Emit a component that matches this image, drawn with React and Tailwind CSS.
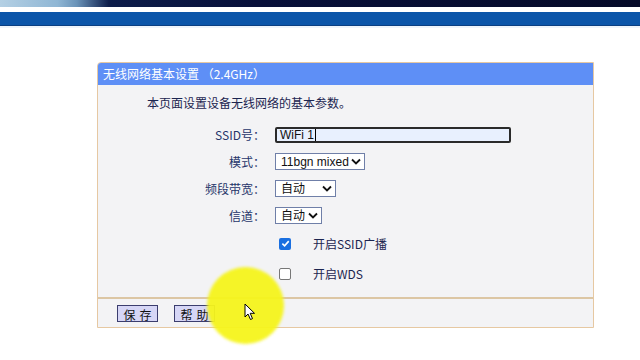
import React from "react";

const cjk = "font-['SimSun','Noto_Sans_CJK_SC',sans-serif]";

function Chevron() {
    return (
        <svg width="10" height="7" viewBox="0 0 10 7" className="shrink-0">
            <path d="M1 1.5 L5 5.5 L9 1.5" fill="none" stroke="#111" strokeWidth="1.8" />
        </svg>
    );
}

function FakeSelect({ value, width }) {
    return (
        <div
            className={`h-[17px] ${width} bg-white border border-[#6f7fa8] flex items-center justify-between pl-[5px] pr-[3px] text-[12px] text-[#111] font-['Liberation_Sans','Noto_Sans_CJK_SC',sans-serif]`}
        >
            <span>{value}</span>
            <Chevron />
        </div>
    );
}

function Row({ label, h = "h-[27px]", children }) {
    return (
        <div className={`flex items-center ${h}`}>
            <div className={`w-[169px] text-right pr-[2px] text-[12px] text-[#26356a] ${cjk}`}>{label}</div>
            <div className="ml-[8px] flex items-center">{children}</div>
        </div>
    );
}

export default function App() {
    return (
        <div className="w-[640px] h-[360px] bg-white overflow-hidden relative">
            {/* banner */}
            <div className="h-[7px] bg-[linear-gradient(90deg,#b4d0e4_0%,#8fb6d4_9%,#6a93b8_12%,#0d1d4a_17%,#08103a_40%,#050a28_100%)]" />
            <div className="h-[5px] bg-white" />
            <div className="h-[14px] bg-[#0b55a9] border-b border-[#0a3f82]" />
            <div className="h-[2px] bg-[#eef4fb]" />

            {/* panel */}
            <div className="ml-[97px] mt-[34px] w-[497px] border border-[#e6c8a2] rounded-tl-[4px] bg-[#f3f3f5]">
                <div className={`h-[22px] bg-[#5e8ff6] rounded-tl-[3px] flex items-center pl-[5px] text-[12px] text-white ${cjk}`}>
                    无线网络基本设置 （2.4GHz）
                </div>
                <div className="pb-[8px]">
                    <div className={`h-[36px] flex items-center pl-[49px] text-[12px] text-[#1c2550] ${cjk}`}>
                        本页面设置设备无线网络的基本参数。
                    </div>
                    <Row label="SSID号：">
                        <div className="w-[236px] h-[16px] border-2 border-[#2a2a2a] rounded-[2px] bg-[#e8f0fe] flex items-center pl-[3px] text-[12px] text-[#111] font-['Liberation_Sans',sans-serif]">
                            WiFi 1<span className="w-px h-[12px] bg-black ml-[1px]" />
                        </div>
                    </Row>
                    <Row label="模式：">
                        <FakeSelect value="11bgn mixed" width="w-[90px]" />
                    </Row>
                    <Row label="频段带宽：">
                        <FakeSelect value="自动" width="w-[61px]" />
                    </Row>
                    <Row label="信道：">
                        <FakeSelect value="自动" width="w-[47px]" />
                    </Row>
                    <Row label="" h="h-[29px]">
                        <div className="ml-[4px] w-[12px] h-[12px] rounded-[2px] bg-[#1a6fe0] flex items-center justify-center">
                            <svg width="9" height="9" viewBox="0 0 10 10">
                                <path d="M1.5 5.2 L4 7.6 L8.6 2.4" fill="none" stroke="white" strokeWidth="1.8" />
                            </svg>
                        </div>
                        <span className={`ml-[22px] text-[12px] text-[#1c2550] ${cjk}`}>开启SSID广播</span>
                    </Row>
                    <Row label="" h="h-[31px]">
                        <div className="ml-[4px] w-[12px] h-[12px] rounded-[2px] bg-white border border-[#777]" />
                        <span className={`ml-[22px] text-[12px] text-[#1c2550] ${cjk}`}>开启WDS</span>
                    </Row>
                </div>
                <div className="border-t-2 border-[#dcc6a4] h-[30px] flex items-center pl-[19px] gap-[16px]">
                    <button className={`w-[41px] h-[17px] bg-[#d6d6f6] border border-[#3b3d6e] text-[12px] text-[#111] tracking-[4px] pl-[4px] ${cjk}`}>
                        保存
                    </button>
                    <button className={`w-[41px] h-[17px] bg-[#d6d6f6] border border-[#3b3d6e] text-[12px] text-[#111] tracking-[4px] pl-[4px] ${cjk}`}>
                        帮助
                    </button>
                </div>
            </div>

            {/* cursor highlight */}
            <div className="absolute left-[207px] top-[267px] w-[77px] h-[77px] rounded-full bg-[#f6f51c] blur-[1.5px] opacity-95" />
            <svg className="absolute left-[244px] top-[303px]" width="12" height="18" viewBox="0 0 12 18">
                <path d="M1 1 L1 14 L4 11 L6.5 16.5 L8.5 15.6 L6.2 10.3 L10.5 10.3 Z" fill="white" stroke="black" strokeWidth="1" />
            </svg>
        </div>
    );
}
